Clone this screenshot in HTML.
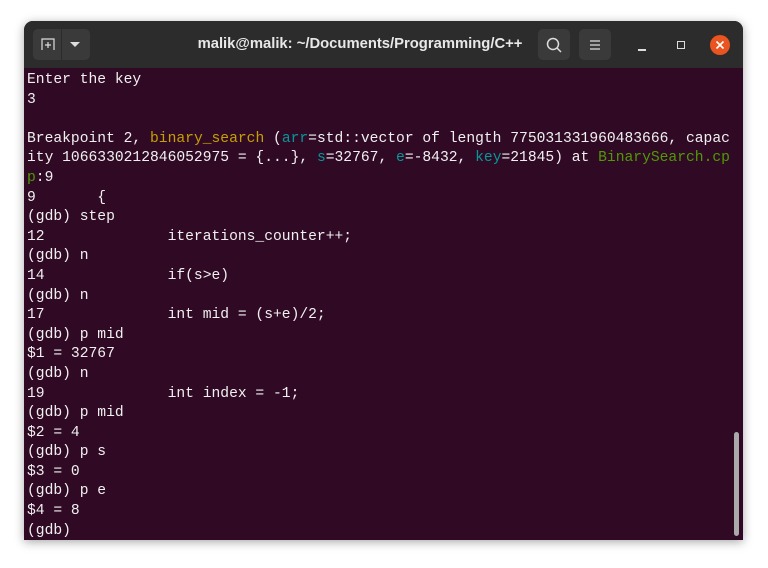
<!DOCTYPE html>
<html><head><style>
html,body{margin:0;padding:0;width:768px;height:568px;background:#fff;overflow:hidden}
.win{position:absolute;left:24px;top:21px;width:719px;height:519px;background:#300a24;border-radius:9px 9px 0 0;box-shadow:0 2px 10px rgba(0,0,0,.35);overflow:hidden}
.tb{position:absolute;left:0;top:0;width:719px;height:47px;background:#2c2c2c}
.btn{position:absolute;top:8px;height:31px;background:#3a3a3a;border-radius:5px}
.title{position:absolute;left:0;width:672px;top:15px;text-align:center;font:bold 14.8px "Liberation Sans",sans-serif;color:#e8e8e8}
pre{position:absolute;left:3px;top:50px;margin:0;font:14.65px/19.6px "Liberation Mono",monospace;color:#f0f0f0}
.y{color:#c4a000}.c{color:#06989a}.g{color:#4e9a06}
.sb{position:absolute;left:710px;top:411px;width:5px;height:104px;background:#aaa;border-radius:3px}
</style></head><body>
<div class="win">
<div class="tb">
 <div class="btn" style="left:9px;width:57px"></div>
 <div style="position:absolute;left:37px;top:8px;width:1px;height:31px;background:#2c2c2c"></div>
 <svg style="position:absolute;left:16px;top:15px" width="16" height="16" viewBox="0 0 16 16" fill="none" stroke="#ddd" stroke-width="1.2"><path d="M2 14V3h12v11"/><path d="M8 6v6M5 9h6"/></svg>
 <svg style="position:absolute;left:45px;top:20px" width="12" height="8"><path d="M1 1h10L6 6z" fill="#ddd"/></svg>
 <div class="title">malik@malik: ~/Documents/Programming/C++</div>
 <div class="btn" style="left:514px;width:32px"></div>
 <svg style="position:absolute;left:521px;top:15px" width="18" height="18" fill="none" stroke="#ddd" stroke-width="1.5"><circle cx="8" cy="8" r="5.5"/><path d="M12 12l4 4"/></svg>
 <div class="btn" style="left:555px;width:32px"></div>
 <svg style="position:absolute;left:563px;top:16px" width="16" height="16" stroke="#ddd" stroke-width="1.3"><path d="M3 4h10M3 8h10M3 12h10"/></svg>
 <div style="position:absolute;left:614px;top:28px;width:8px;height:1.5px;background:#ddd"></div>
 <div style="position:absolute;left:653px;top:20px;width:6px;height:6px;border:1.3px solid #ddd"></div>
 <div style="position:absolute;left:686px;top:14px;width:20px;height:20px;border-radius:50%;background:#e95420"></div>
 <svg style="position:absolute;left:686px;top:14px" width="20" height="20" stroke="#fff" stroke-width="1.6"><path d="M6.5 6.5l7 7M13.5 6.5l-7 7"/></svg>
</div>
<pre>Enter the key
3

Breakpoint 2, <span class="y">binary_search</span> (<span class="c">arr</span>=std::vector of length 775031331960483666, capac
ity 1066330212846052975 = {...}, <span class="c">s</span>=32767, <span class="c">e</span>=-8432, <span class="c">key</span>=21845) at <span class="g">BinarySearch.cp</span>
<span class="g">p</span>:9
9       {
(gdb) step
12              iterations_counter++;
(gdb) n
14              if(s&gt;e)
(gdb) n
17              int mid = (s+e)/2;
(gdb) p mid
$1 = 32767
(gdb) n
19              int index = -1;
(gdb) p mid
$2 = 4
(gdb) p s
$3 = 0
(gdb) p e
$4 = 8
(gdb) </pre>
<div class="sb"></div>
</div>
</body></html>
